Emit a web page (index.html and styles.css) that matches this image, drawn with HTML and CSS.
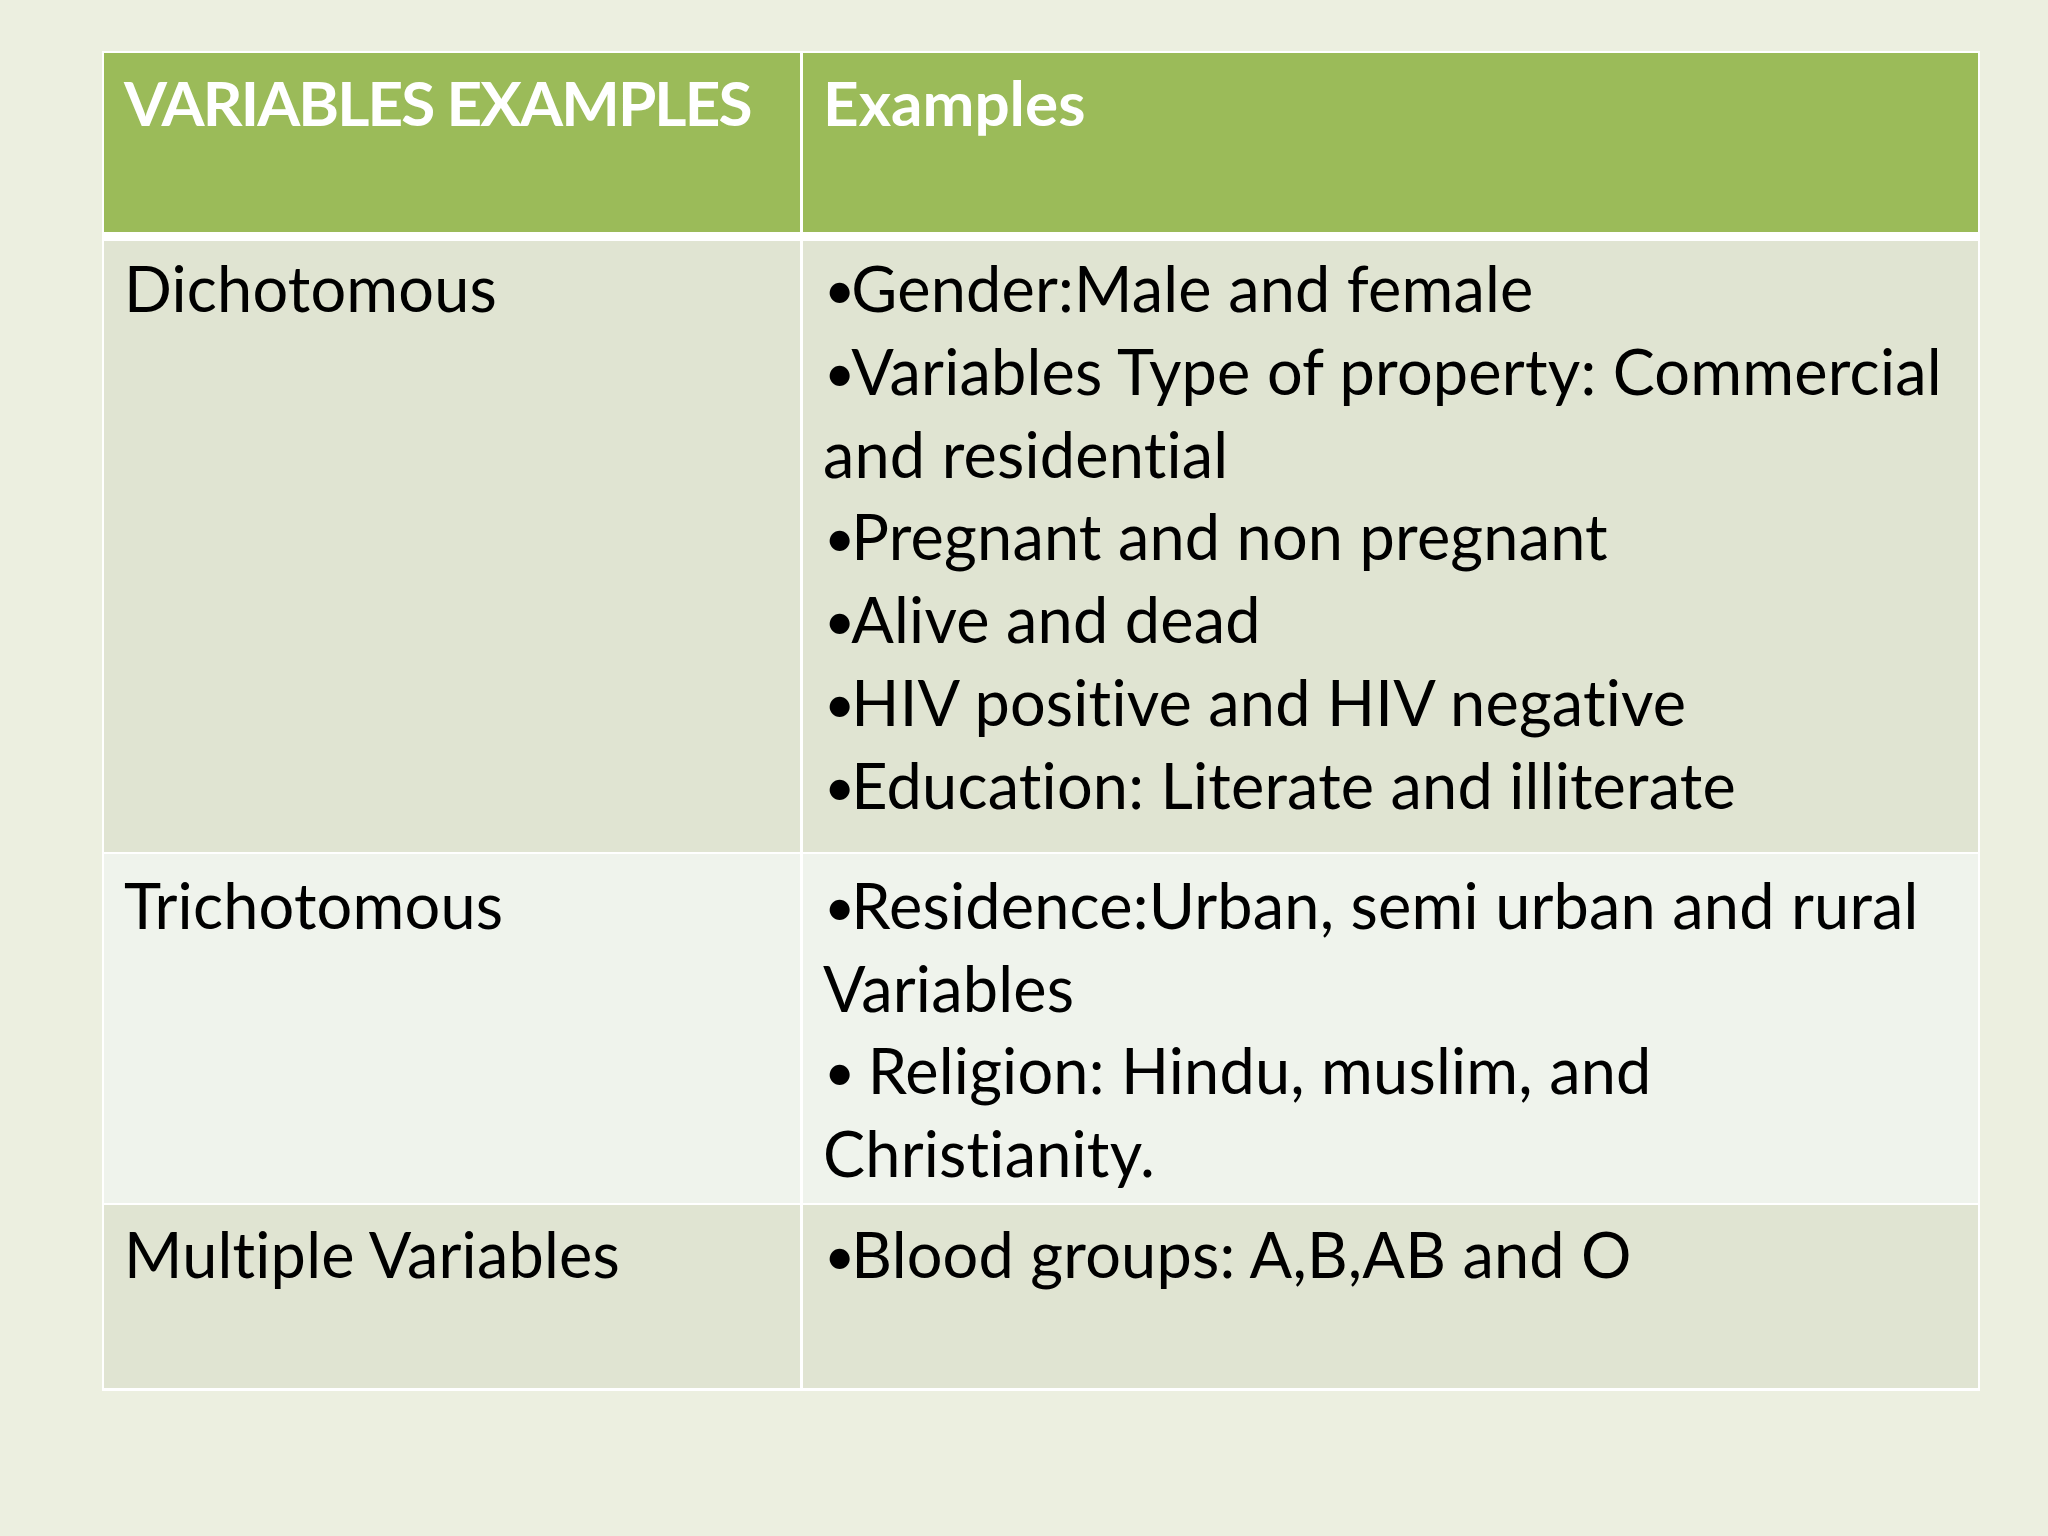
FILE: index.html
```html
<!DOCTYPE html>
<html lang="en">
<head>
<meta charset="utf-8">
<title>Variables Examples</title>
<link rel="stylesheet" href="styles.css">
</head>
<body>
<main class="slide">
  <div class="table">
    <div class="cell head caps">VARIABLES EXAMPLES</div>
    <div class="cell head">Examples</div>

    <div class="cell band">Dichotomous</div>
    <div class="cell band">
      <p><span class="bul">•</span>Gender:Male and female</p>
      <p><span class="bul">•</span>Variables Type of property: Commercial<br>and residential</p>
      <p><span class="bul">•</span>Pregnant and non pregnant</p>
      <p><span class="bul">•</span>Alive and dead</p>
      <p><span class="bul">•</span>HIV positive and HIV negative</p>
      <p><span class="bul">•</span>Education: Literate and illiterate</p>
    </div>

    <div class="cell light">Trichotomous</div>
    <div class="cell light">
      <p><span class="bul">•</span>Residence:Urban, semi urban and rural<br>Variables</p>
      <p><span class="bul">•</span> Religion: Hindu, muslim, and<br>Christianity.</p>
    </div>

    <div class="cell band last">Multiple Variables</div>
    <div class="cell band last">
      <p><span class="bul">•</span>Blood groups: A,B,AB and O</p>
    </div>
  </div>
</main>
</body>
</html>
```

FILE: styles.css
```css
html, body {
  margin: 0;
  padding: 0;
}

body {
  width: 2048px;
  height: 1536px;
  background: #ecefe0;
  font-family: Lato, "Open Sans", "Liberation Sans", sans-serif;
  color: #000;
  overflow: hidden;
}

.slide {
  padding: 51px 0 0 102px;
}

.table {
  display: inline-grid;
  grid-template-columns: 696px 1175px;
  grid-template-rows: 186px 611px 349px 183px;
  column-gap: 3px;
  row-gap: 2px;
  background: #ffffff;
  padding: 2px 2px 3px 2px;
}

.cell {
  box-sizing: border-box;
  padding: 6px 20px 0 20px;
  font-size: 63px;
  line-height: 82px;
  letter-spacing: 0.2px;
  white-space: nowrap;
  font-variant-ligatures: none;
  font-feature-settings: "liga" 0, "clig" 0;
}

.cell p {
  margin: 0;
}

.bul {
  font-size: 54px;
  vertical-align: 3px;
  letter-spacing: -4px;
  margin-left: 1px;
}

.head {
  background: #9bbb59;
  color: #ffffff;
  font-weight: 700;
  font-size: 62px;
  letter-spacing: 0;
  padding-top: 8px;
  border-bottom: 7px solid #ffffff;
}

.caps {
  letter-spacing: -1.9px;
}

.band {
  background: #e0e4d2;
}

.light {
  background: #eff3ec;
  padding-top: 10px;
}

.last {
  padding-top: 8px;
}
```
